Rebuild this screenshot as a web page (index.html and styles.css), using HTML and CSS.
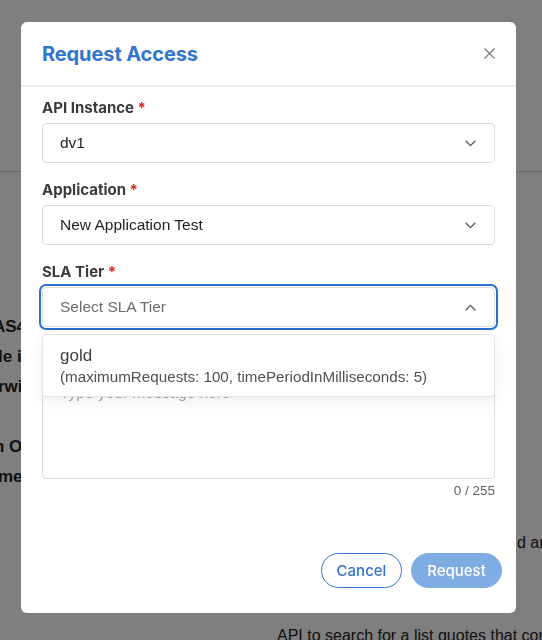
FILE: index.html
```html
<!DOCTYPE html>
<html lang="en">
<head>
<meta charset="utf-8">
<title>Request Access</title>
<link rel="stylesheet" href="styles.css">
</head>
<body>
  <div class="page">
    <div class="page-top"></div>
    <div class="page-main">
      <div class="side">
        <div class="side-line shift-a">AS4 Quotes</div>
        <div class="side-line">le in this</div>
        <div class="side-line">rwise set</div>
        <div class="side-line">&nbsp;</div>
        <div class="side-line shift-b">n Order</div>
        <div class="side-line">ment</div>
      </div>
      <div class="content">
        <p class="p1">d and returns the quote</p>
        <p class="p2">API to search for a list quotes that contain</p>
      </div>
    </div>
  </div>

  <div class="overlay">
    <div class="modal">
      <div class="modal-header">
        <h2 class="modal-title">Request Access</h2>
        <svg class="close" width="11" height="11" viewBox="0 0 11 11"><path d="M0.5 0.5 L10.5 10.5 M10.5 0.5 L0.5 10.5" stroke="#7a7a7a" stroke-width="1.3" fill="none"/></svg>
      </div>
      <div class="modal-body">
        <div class="field">
          <div class="label">API Instance <span class="req">*</span></div>
          <div class="select">
            <span class="value">dv1</span>
            <svg class="chev" width="11" height="7" viewBox="0 0 11 7"><path d="M0.7 0.8 L5.5 5.6 L10.3 0.8" stroke="#555" stroke-width="1.3" fill="none"/></svg>
          </div>
        </div>
        <div class="field">
          <div class="label">Application <span class="req">*</span></div>
          <div class="select">
            <span class="value">New Application Test</span>
            <svg class="chev" width="11" height="7" viewBox="0 0 11 7"><path d="M0.7 0.8 L5.5 5.6 L10.3 0.8" stroke="#555" stroke-width="1.3" fill="none"/></svg>
          </div>
        </div>
        <div class="field field-sla">
          <div class="label">SLA Tier <span class="req">*</span></div>
          <div class="select select-focus">
            <span class="value placeholder">Select SLA Tier</span>
            <svg class="chev" width="11" height="7" viewBox="0 0 11 7"><path d="M0.7 6.2 L5.5 1.4 L10.3 6.2" stroke="#555" stroke-width="1.3" fill="none"/></svg>
          </div>
          <div class="menu">
            <div class="option">
              <div class="opt-name">gold</div>
              <div class="opt-desc">(maximumRequests: 100, timePeriodInMilliseconds: 5)</div>
            </div>
          </div>
        </div>
        <div class="field field-msg">
          <div class="label">Message</div>
          <div class="textarea"><span class="ta-ph">Type your message here</span></div>
          <div class="counter">0 / 255</div>
        </div>
      </div>
      <div class="modal-footer">
        <button class="btn btn-outline">Cancel</button>
        <button class="btn btn-primary">Request</button>
      </div>
    </div>
  </div>
</body>
</html>
```

FILE: styles.css
```css
html, body {
  margin: 0;
  padding: 0;
  height: 100%;
  overflow: hidden;
}
body {
  background: #ffffff;
  font-family: "Liberation Sans", Arial, sans-serif;
  color: #222;
}

/* background page */
.page-top {
  height: 171px;
  border-bottom: 1px solid #d6d6d6;
}
.page-main {
  display: flex;
}
.side {
  width: 150px;
  flex: none;
  margin-left: -2px;
  padding-top: 140px;
  font-weight: bold;
  font-size: 17px;
  line-height: 30px;
  white-space: nowrap;
  color: #222;
}
.shift-a { margin-left: -5px; }
.shift-b { margin-left: -4px; }
.content {
  margin-left: 129px;
  padding-top: 359px;
  font-size: 16px;
  line-height: 24px;
  white-space: nowrap;
  color: #222;
}
.content p { margin: 0; }
.p1 { padding-left: 240px; }
.content .p2 { margin-top: 69px; }

/* overlay + modal */
.overlay {
  position: fixed;
  inset: 0;
  background: rgba(0, 0, 0, 0.5);
  padding: 22px 0 0 21px;
}
.modal {
  width: 495px;
  height: 591px;
  background: #fff;
  border-radius: 6px;
  display: flex;
  flex-direction: column;
  font-family: Inter, "Liberation Sans", sans-serif;
}
.modal-header {
  height: 63px;
  border-bottom: 2px solid #eeeeee;
  padding: 0 21px;
  display: flex;
  align-items: center;
  justify-content: space-between;
}
.modal-title {
  margin: 0;
  font-size: 20px;
  font-weight: 700;
  color: #2f74d0;
  letter-spacing: -0.1px;
}
.close { display: block; }

.modal-body {
  flex: 1;
  padding: 11px 21px 0;
}
.field {
  margin-bottom: 17px;
}
.field-sla { position: relative; }
.label {
  font-size: 15px;
  line-height: 20px;
  font-weight: 700;
  color: #3b3b3b;
  margin-bottom: 5px;
}
.req { color: #d52b1e; }
.select {
  height: 40px;
  box-sizing: border-box;
  border: 1px solid #dcdcdc;
  border-radius: 4px;
  padding: 0 18px 0 17px;
  display: flex;
  align-items: center;
  justify-content: space-between;
  font-family: "Liberation Sans", Arial, sans-serif;
  font-size: 15.5px;
  color: #1f1f1f;
}
.select-focus {
  outline: 2px solid #2b6fd2;
  outline-offset: 1px;
}
.placeholder { color: #6b6b6b; }
.chev { display: block; }

.menu {
  position: absolute;
  left: 0;
  right: 0;
  top: 72px;
  height: 63px;
  box-sizing: border-box;
  background: #fff;
  border: 1px solid #e4e4e4;
  border-radius: 4px;
  box-shadow: 0 4px 14px rgba(0, 0, 0, 0.08);
  z-index: 2;
  font-family: "Liberation Sans", Arial, sans-serif;
}
.option {
  padding: 10px 17px 0;
}
.opt-name {
  font-size: 17px;
  line-height: 22px;
  color: #404040;
}
.opt-desc {
  font-size: 15.2px;
  line-height: 20px;
  color: #505050;
}

.textarea {
  height: 110px;
  box-sizing: border-box;
  border: 1px solid #dcdcdc;
  border-radius: 4px;
  padding: 13px 17px;
  font-family: "Liberation Sans", Arial, sans-serif;
  font-size: 15.5px;
  line-height: 20px;
}
.ta-ph { color: #a8a8a8; }
.counter {
  margin-top: 3px;
  text-align: right;
  font-family: "Liberation Sans", Arial, sans-serif;
  font-size: 13.5px;
  line-height: 18px;
  color: #5f5f5f;
}

.modal-footer {
  display: flex;
  justify-content: flex-end;
  gap: 9px;
  padding: 0 14px 25px;
}
.btn {
  height: 35px;
  border-radius: 18px;
  font-family: Inter, "Liberation Sans", sans-serif;
  font-size: 15px;
  font-weight: 500;
  box-sizing: border-box;
  padding: 0;
  cursor: pointer;
}
.btn-outline {
  width: 81px;
  background: #fff;
  border: 1px solid #2f74d0;
  color: #2f74d0;
}
.btn-primary {
  width: 91px;
  background: #80ace4;
  border: 1px solid #80ace4;
  color: #fff;
}
```
